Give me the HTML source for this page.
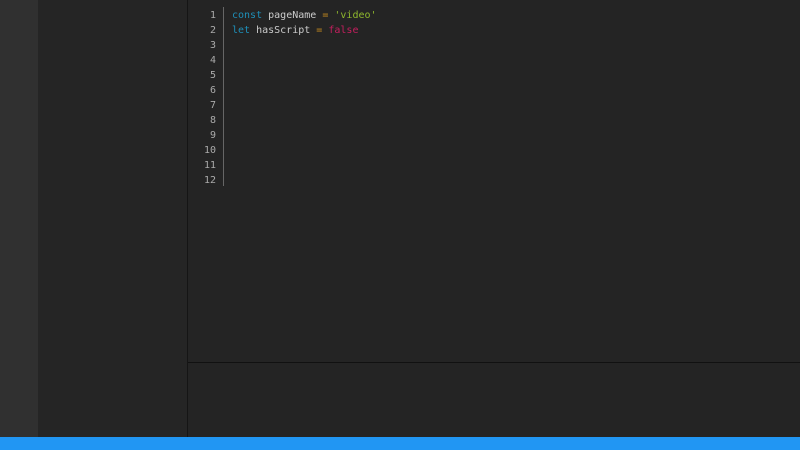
<!DOCTYPE html>
<html><head><style>
body{margin:0;width:800px;height:450px;overflow:hidden;background:#242424;position:relative;font-family:"DejaVu Sans Mono","Liberation Mono",monospace;}
.act{position:absolute;left:0;top:0;width:38px;height:437px;background:#303030}
.side{position:absolute;left:38px;top:0;width:149px;height:437px;background:#252525}
.vb{position:absolute;left:187px;top:0;width:1px;height:437px;background:#151515}
.hb{position:absolute;left:188px;top:362px;width:612px;height:1px;background:#111}
.status{position:absolute;left:0;top:437px;width:800px;height:13px;background:#2196f3}
.gut{position:absolute;left:223px;top:7px;width:1px;height:179px;background:#666}
.nums{position:absolute;left:190px;top:8px;width:26px;text-align:right;color:#aaa;font-size:10px;line-height:15px}
.code{position:absolute;left:232px;top:8px;font-size:10px;line-height:15px;color:#ccc;white-space:pre}
.k{color:#1e8fb8}.s{color:#8fb82d}.o{color:#c58a1e}.b{color:#c41f5e}
</style></head><body>
<div class="act"></div><div class="side"></div><div class="vb"></div><div class="hb"></div>
<div class="gut"></div>
<div class="nums">1<br>2<br>3<br>4<br>5<br>6<br>7<br>8<br>9<br>10<br>11<br>12</div>
<div class="code"><span class="k">const</span> pageName <span class="o">=</span> <span class="s">'video'</span>
<span class="k">let</span> hasScript <span class="o">=</span> <span class="b">false</span></div>
<div class="status"></div>
</body></html>
